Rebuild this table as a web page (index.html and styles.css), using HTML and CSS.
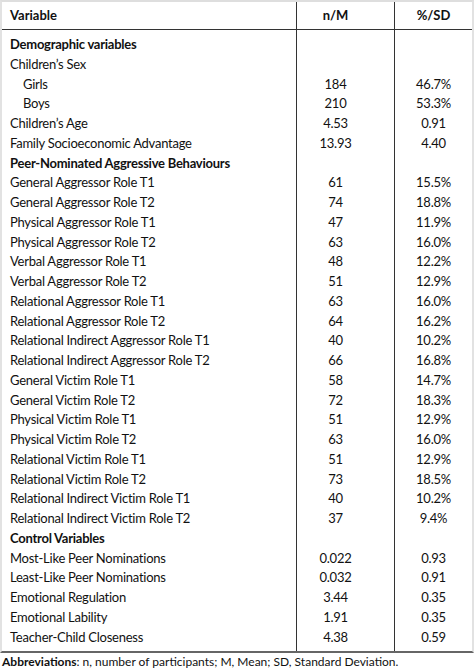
FILE: index.html
```
<!DOCTYPE html>
<html>
<head>
<meta charset="utf-8">
<link rel="stylesheet" href="styles.css">
</head>
<body>
<div class="frame">
  <div class="row head">
    <div class="c1">Variable</div>
    <div class="c2">n/M</div>
    <div class="c3">%/SD</div>
  </div>
  <div class="body">
    <div class="row first"><div class="c1 b">Demographic variables</div><div class="c2"></div><div class="c3"></div></div>
    <div class="row"><div class="c1">Children’s Sex</div><div class="c2"></div><div class="c3"></div></div>
    <div class="row"><div class="c1 ind">Girls</div><div class="c2">184</div><div class="c3">46.7%</div></div>
    <div class="row"><div class="c1 ind">Boys</div><div class="c2">210</div><div class="c3">53.3%</div></div>
    <div class="row"><div class="c1">Children’s Age</div><div class="c2">4.53</div><div class="c3">0.91</div></div>
    <div class="row"><div class="c1">Family Socioeconomic Advantage</div><div class="c2">13.93</div><div class="c3">4.40</div></div>
    <div class="row"><div class="c1 b">Peer-Nominated Aggressive Behaviours</div><div class="c2"></div><div class="c3"></div></div>
    <div class="row"><div class="c1">General Aggressor Role T1</div><div class="c2">61</div><div class="c3">15.5%</div></div>
    <div class="row"><div class="c1">General Aggressor Role T2</div><div class="c2">74</div><div class="c3">18.8%</div></div>
    <div class="row"><div class="c1">Physical Aggressor Role T1</div><div class="c2">47</div><div class="c3">11.9%</div></div>
    <div class="row"><div class="c1">Physical Aggressor Role T2</div><div class="c2">63</div><div class="c3">16.0%</div></div>
    <div class="row"><div class="c1">Verbal Aggressor Role T1</div><div class="c2">48</div><div class="c3">12.2%</div></div>
    <div class="row"><div class="c1">Verbal Aggressor Role T2</div><div class="c2">51</div><div class="c3">12.9%</div></div>
    <div class="row"><div class="c1">Relational Aggressor Role T1</div><div class="c2">63</div><div class="c3">16.0%</div></div>
    <div class="row"><div class="c1">Relational Aggressor Role T2</div><div class="c2">64</div><div class="c3">16.2%</div></div>
    <div class="row"><div class="c1">Relational Indirect Aggressor Role T1</div><div class="c2">40</div><div class="c3">10.2%</div></div>
    <div class="row"><div class="c1">Relational Indirect Aggressor Role T2</div><div class="c2">66</div><div class="c3">16.8%</div></div>
    <div class="row"><div class="c1">General Victim Role T1</div><div class="c2">58</div><div class="c3">14.7%</div></div>
    <div class="row"><div class="c1">General Victim Role T2</div><div class="c2">72</div><div class="c3">18.3%</div></div>
    <div class="row"><div class="c1">Physical Victim Role T1</div><div class="c2">51</div><div class="c3">12.9%</div></div>
    <div class="row"><div class="c1">Physical Victim Role T2</div><div class="c2">63</div><div class="c3">16.0%</div></div>
    <div class="row"><div class="c1">Relational Victim Role T1</div><div class="c2">51</div><div class="c3">12.9%</div></div>
    <div class="row"><div class="c1">Relational Victim Role T2</div><div class="c2">73</div><div class="c3">18.5%</div></div>
    <div class="row"><div class="c1">Relational Indirect Victim Role T1</div><div class="c2">40</div><div class="c3">10.2%</div></div>
    <div class="row"><div class="c1">Relational Indirect Victim Role T2</div><div class="c2">37</div><div class="c3">9.4%</div></div>
    <div class="row"><div class="c1 b">Control Variables</div><div class="c2"></div><div class="c3"></div></div>
    <div class="row"><div class="c1">Most-Like Peer Nominations</div><div class="c2">0.022</div><div class="c3">0.93</div></div>
    <div class="row"><div class="c1">Least-Like Peer Nominations</div><div class="c2">0.032</div><div class="c3">0.91</div></div>
    <div class="row"><div class="c1">Emotional Regulation</div><div class="c2">3.44</div><div class="c3">0.35</div></div>
    <div class="row"><div class="c1">Emotional Lability</div><div class="c2">1.91</div><div class="c3">0.35</div></div>
    <div class="row last"><div class="c1">Teacher-Child Closeness</div><div class="c2">4.38</div><div class="c3">0.59</div></div>
  </div>
</div>
<p class="note"><b>Abbreviations</b>: n, number of participants; M, Mean; SD, Standard Deviation.</p>
</body>
</html>
```

FILE: styles.css
```
html, body {
  margin: 0;
  padding: 0;
  background: #fff;
}
body {
  font-family: Lato, "Open Sans", sans-serif;
  font-size: 13px;
  color: #111;
  width: 474px;
}
.frame {
  border-top: 2px solid #dedede;
  border-left: 2px solid #e2e2e2;
  border-right: 2px solid #e2e2e2;
  border-bottom: 2px solid #666;
  width: 470px;
}
.row {
  display: grid;
  grid-template-columns: 294px 98px 78px;
  line-height: 19.75px;
}
.body .row {
  letter-spacing: -0.25px;
}
.head {
  height: 27px;
  line-height: 27px;
  font-weight: bold;
  border-bottom: 1px solid #333;
}
.c1 {
  padding-left: 8px;
  white-space: nowrap;
}
.c2 {
  border-left: 1px solid #333;
  text-align: center;
  padding-right: 20px;
}
.c3 {
  border-left: 1px solid #333;
  text-align: center;
}
.b {
  font-weight: bold;
}
.ind {
  padding-left: 21px;
}
.first > div {
  padding-top: 5px;
}
.last > div {
  padding-bottom: 4px;
}
.note {
  margin: 0;
  padding-left: 2px;
  font-size: 12px;
  line-height: 17px;
}
```
